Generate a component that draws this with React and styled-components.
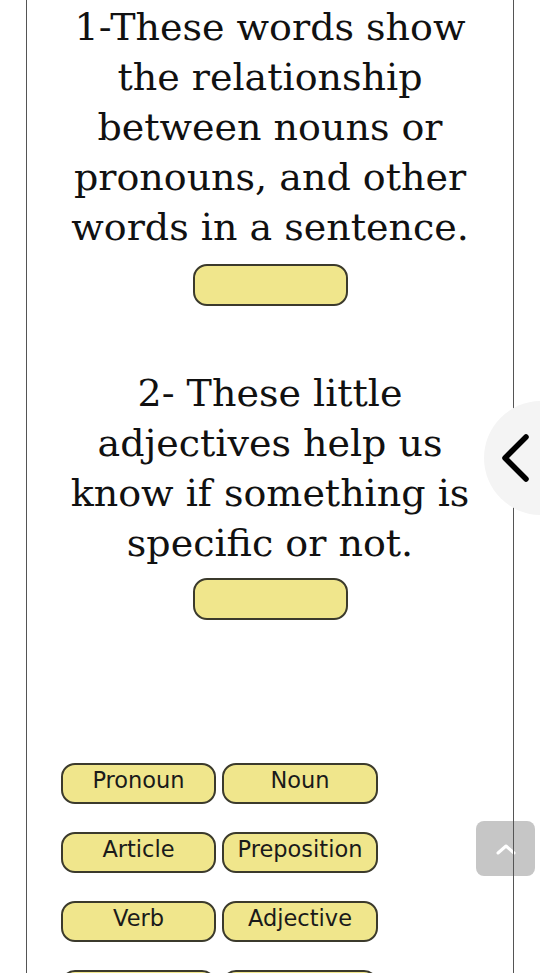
import styled, { createGlobalStyle } from 'styled-components';

const GlobalStyle = createGlobalStyle`
  html, body {
    margin: 0;
    padding: 0;
    background: #ffffff;
    overflow: hidden;
  }
`;

const Page = styled.div`
  width: 540px;
  height: 973px;
  overflow: hidden;
  position: relative;
`;

const Panel = styled.main`
  position: relative;
  z-index: 1;
  margin-left: 26px;
  width: 486px;
  min-height: 1100px;
  border-left: 1px solid #555;
  border-right: 1px solid #555;
  padding-top: 2px;
`;

const Question = styled.section`
  display: flex;
  flex-direction: column;
  align-items: center;
  margin-bottom: ${(p) => p.$gap}px;
`;

const Prompt = styled.p`
  margin: 0;
  padding: 0 ${(p) => p.$pad}px;
  text-align: center;
  font-family: 'DejaVu Serif', 'Liberation Serif', serif;
  font-size: 38px;
  line-height: 50px;
  color: #111;
`;

const Blank = styled.div`
  box-sizing: border-box;
  margin-top: ${(p) => p.$top}px;
  width: 155px;
  height: 42px;
  border: 2px solid #3b3a2c;
  border-radius: 14px;
  background: #f0e68c;
`;

const WordBank = styled.div`
  display: grid;
  grid-template-columns: 155px 156px;
  column-gap: 6px;
  row-gap: 28px;
  margin-left: 34px;
`;

const Word = styled.button`
  box-sizing: border-box;
  height: 41px;
  padding: 0 0 7px;
  border: 2px solid #3b3a2c;
  border-radius: 14px;
  background: #f0e68c;
  font-family: 'DejaVu Sans', 'Noto Sans', sans-serif;
  font-size: 22.5px;
  color: #1a1a1a;
  text-align: center;
  white-space: nowrap;
`;

const SideTab = styled.div`
  position: absolute;
  z-index: 2;
  left: 484px;
  top: 401px;
  width: 114px;
  height: 114px;
  border-radius: 50%;
  background: #f4f4f4;
  display: flex;
  align-items: center;
  padding-left: 16px;
  box-sizing: border-box;
`;

const ScrollTop = styled.div`
  position: absolute;
  z-index: 0;
  left: 476px;
  top: 821px;
  width: 59px;
  height: 55px;
  border-radius: 8px;
  background: #c6c6c6;
  display: flex;
  align-items: center;
  justify-content: center;
`;

const words = ['Pronoun', 'Noun', 'Article', 'Preposition', 'Verb', 'Adjective', 'Adverb', 'Conjunction'];

export default function App() {
  return (
    <Page>
      <GlobalStyle />
      <Panel>
        <Question $gap={62}>
          <Prompt $pad={16}>
            1-These words show the relationship between nouns or pronouns, and other words in a sentence.
          </Prompt>
          <Blank $top={12} />
        </Question>
        <Question $gap={143}>
          <Prompt $pad={26}>
            2- These little adjectives help us know if something is specific or not.
          </Prompt>
          <Blank $top={10} />
        </Question>
        <WordBank>
          {words.map((w) => (
            <Word key={w}>{w}</Word>
          ))}
        </WordBank>
      </Panel>
      <SideTab>
        <svg width="30" height="50" viewBox="0 0 30 50">
          <path d="M26 4 L5 25 L26 46" fill="none" stroke="#000" strokeWidth="5.5" strokeLinecap="round" strokeLinejoin="round" />
        </svg>
      </SideTab>
      <ScrollTop>
        <svg width="22" height="14" viewBox="0 0 22 14">
          <path d="M3 11 L11 4 L19 11" fill="none" stroke="#fff" strokeWidth="3" strokeLinecap="round" strokeLinejoin="round" />
        </svg>
      </ScrollTop>
    </Page>
  );
}
